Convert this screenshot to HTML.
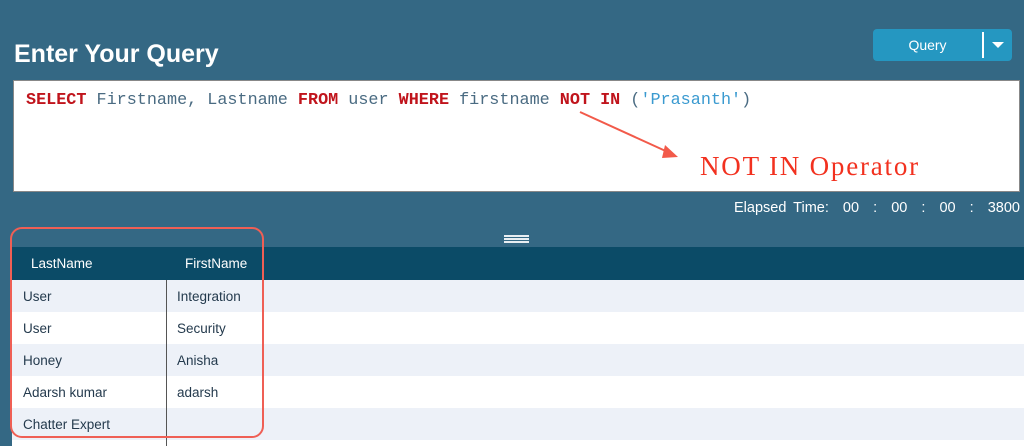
<!DOCTYPE html>
<html style="overflow:hidden;height:446px"><head><style>
body{margin:0;width:1024px;height:446px;background:#346884;overflow:hidden;position:relative;font-family:"Liberation Sans",sans-serif}
.t{position:absolute;left:14px;top:40px;color:#fff;font-weight:bold;font-size:25px}
.btn{position:absolute;left:873px;top:29px;width:139px;height:32px;background:#2597c1;border-radius:4px;color:#fff;font-size:14px}
.btn span{position:absolute;left:0;width:109px;top:8px;text-align:center}
.btn i{position:absolute;left:109px;top:3px;width:2px;height:26px;background:#fff}
.btn b{position:absolute;left:119px;top:13px;border-left:6px solid transparent;border-right:6px solid transparent;border-top:6px solid #fff}
.q{position:absolute;left:13px;top:80px;width:1005px;height:110px;background:#fff;border:1px solid #888}
.code{position:absolute;left:12px;top:10px;font-family:"Liberation Mono",monospace;font-size:16.8px;color:#4a6b82;white-space:pre}
.k{color:#c0141c;font-weight:bold}.s{color:#3a9ad0}
.note{position:absolute;left:700px;top:151px;color:#f2311f;font-family:"Liberation Serif",serif;font-size:27px;letter-spacing:1.8px}
.el{position:absolute;right:4px;top:200px;color:#fff;font-size:14.5px;word-spacing:3px}
.hd{position:absolute;left:12px;top:247px;width:1012px;height:33px;background:#0b4b67;color:#fff;font-size:13.5px}
.row{position:absolute;left:12px;width:1012px;height:32px;font-size:13.5px;color:#243a4d}
.row span,.hd span{position:absolute;top:9px}
.div{position:absolute;left:166px;top:280px;width:1px;height:166px;background:#555}
.hl{position:absolute;left:504px;width:25px;height:2px;background:#e8eef2}
</style></head><body>
<div class="t">Enter Your Query</div>
<div class="btn"><span>Query</span><i></i><b></b></div>
<div class="q"><div class="code"><span class="k">SELECT</span> Firstname, Lastname <span class="k">FROM</span> user <span class="k">WHERE</span> firstname <span class="k">NOT IN</span> (<span class="s">'Prasanth'</span>)</div></div>
<svg style="position:absolute;left:0;top:0" width="1024" height="446">
<line x1="580" y1="112" x2="670" y2="153" stroke="#f25a4a" stroke-width="2"/>
<polygon points="678,157 665,145 662,158" fill="#f25a4a"/>
</svg>
<div class="note">NOT IN Operator</div>
<div class="el">Elapsed Time:&nbsp; 00 &nbsp;:&nbsp; 00 &nbsp;:&nbsp; 00 &nbsp;:&nbsp; 3800</div>
<div class="hl" style="top:235px"></div><div class="hl" style="top:238px"></div><div class="hl" style="top:241px"></div>
<div class="hd"><span style="left:19px">LastName</span><span style="left:173px">FirstName</span></div>
<div class="row" style="top:280px;background:#edf1f8"><span style="left:11px">User</span><span style="left:165px">Integration</span></div>
<div class="row" style="top:312px;background:#fff"><span style="left:11px">User</span><span style="left:165px">Security</span></div>
<div class="row" style="top:344px;background:#edf1f8"><span style="left:11px">Honey</span><span style="left:165px">Anisha</span></div>
<div class="row" style="top:376px;background:#fff"><span style="left:11px">Adarsh kumar</span><span style="left:165px">adarsh</span></div>
<div class="row" style="top:408px;background:#edf1f8"><span style="left:11px">Chatter Expert</span></div>
<div class="row" style="top:440px;height:6px;background:#fff"></div>
<div class="div"></div>
<div style="position:absolute;left:10px;top:227px;width:250px;height:207px;border:2px solid #ef5f55;border-radius:12px"></div>
</body></html>
